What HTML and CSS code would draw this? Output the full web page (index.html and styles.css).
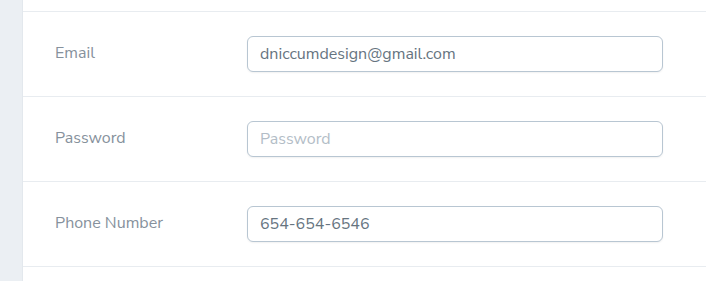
FILE: index.html
```html
<!DOCTYPE html>
<html lang="en">
<head>
    <meta charset="UTF-8">
    <title>Account settings</title>
    <link rel="stylesheet" href="styles.css">
</head>
<body>
    <div class="layout">
        <aside class="sidebar"></aside>
        <main class="panel">
            <div class="top-spacer"></div>

            <div class="field-row">
                <label class="field-label" for="email">Email</label>
                <input class="field-input" type="email" id="email" value="dniccumdesign@gmail.com">
            </div>

            <div class="field-row">
                <label class="field-label" for="password">Password</label>
                <input class="field-input" type="password" id="password" placeholder="Password">
            </div>

            <div class="field-row">
                <label class="field-label" for="phone">Phone Number</label>
                <input class="field-input" type="text" id="phone" value="654-654-6546">
            </div>
        </main>
    </div>
</body>
</html>
```

FILE: styles.css
```css
html, body {
    margin: 0;
    padding: 0;
    height: 100%;
    background: #fff;
}
body {
    font-family: 'Nunito Sans', 'Nunito', 'Open Sans', 'Noto Sans', Arial, sans-serif;
    overflow: hidden;
}
.layout {
    display: flex;
    height: 100%;
}
.sidebar {
    width: 22px;
    flex-shrink: 0;
    background: #ebeff3;
    border-right: 1px solid #e3e8ed;
}
.panel {
    flex: 1;
}
.top-spacer {
    height: 11px;
}
.field-row {
    display: flex;
    align-items: center;
    height: 84px;
    border-top: 1px solid #e8ecf0;
}
.field-row:last-child { border-bottom: 1px solid #e8ecf0; }
.field-label {
    width: 192px;
    padding-left: 32px;
    margin-top: -2px;
    font-size: 16px;
    color: #86919c;
}
.field-input {
    box-sizing: border-box;
    width: 416px;
    height: 36px;
    padding: 0 12px;
    font-family: inherit;
    font-size: 16px;
    color: #66747f;
    border: 1px solid #b8c6d2;
    border-radius: 6px;
    box-shadow: 0 1px 2px rgba(0,0,0,0.06);
    outline: none;
}
.field-input::placeholder { color: #b3bdc7; }
```
